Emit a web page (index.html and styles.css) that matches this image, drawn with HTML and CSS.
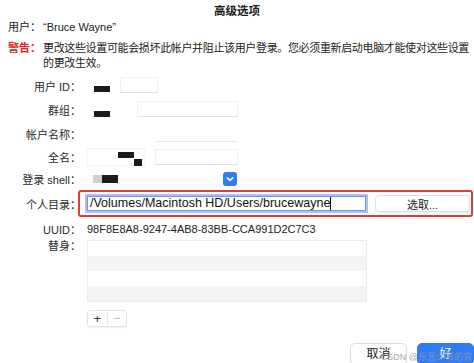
FILE: index.html
```html
<!DOCTYPE html>
<html lang="zh-CN">
<head>
<meta charset="utf-8">
<title>高级选项</title>
<link rel="stylesheet" href="styles.css">
</head>
<body>
<div class="dialog">
  <h1 class="title">高级选项</h1>
  <div class="info">
    <span class="info-label">用户：</span>
    <span class="info-text">“Bruce Wayne”</span>
  </div>
  <div class="info warn">
    <span class="info-label red">警告：</span>
    <span class="info-text tight">更改这些设置可能会损坏此帐户并阻止该用户登录。您必须重新启动电脑才能使对这些设置的更改生效。</span>
  </div>

  <div class="form">
    <div class="label">用户 ID：</div>
    <div class="content">
      <span class="redact rd-id"></span>
      <span class="field f-id"></span>
    </div>

    <div class="label">群组：</div>
    <div class="content">
      <span class="redact rd-grp"></span>
      <span class="field f-grp"></span>
    </div>

    <div class="label">帐户名称：</div>
    <div class="content">
      <span class="field f-acc"></span>
    </div>

    <div class="label">全名：</div>
    <div class="content">
      <span class="ghost">
        <span class="redact rd-n1"></span>
        <span class="redact rd-n2"></span>
      </span>
      <span class="field f-name"></span>
    </div>

    <div class="label">登录 shell：</div>
    <div class="content">
      <span class="select">
        <span class="redact rd-gray"></span>
        <span class="redact rd-sh"></span>
        <span class="chev">
          <svg width="14" height="14" viewBox="0 0 14 14"><path d="M4.3 5.8 L7 8.4 L9.7 5.8" fill="none" stroke="#fff" stroke-width="1.6" stroke-linecap="round" stroke-linejoin="round"/></svg>
        </span>
      </span>
    </div>

    <div class="label">个人目录：</div>
    <div class="content">
      <span class="input"><span class="caret">/Volumes/Macintosh HD/Users/brucewayne</span></span>
      <span class="btn choose">选取...</span>
    </div>

    <div class="label">UUID：</div>
    <div class="content uuid">98F8E8A8-9247-4AB8-83BB-CCA991D2C7C3</div>

    <div class="label top">替身：</div>
    <div class="content top">
      <div class="list">
        <div class="li"></div>
        <div class="li alt"></div>
        <div class="li"></div>
        <div class="li alt"></div>
      </div>
    </div>

    <div class="label"></div>
    <div class="content bottom">
      <span class="pm">
        <span class="pm-btn plus">+</span>
        <span class="pm-sep"></span>
        <span class="pm-btn minus">−</span>
      </span>
    </div>

    <div class="annot"></div>
  </div>

  <div class="footer">
    <span class="btn cancel">取消</span>
    <span class="btn ok">好</span>
  </div>
  <div class="watermark">CSDN @东恶少爷的背</div>
</div>
</body>
</html>
```

FILE: styles.css
```css
* { box-sizing: border-box; }
html, body { margin: 0; padding: 0; background: #fff; }
body {
  font-family: "Liberation Sans", "Noto Sans CJK SC", sans-serif;
  font-size: 11px;
  color: #222;
  width: 474px;
  height: 363px;
  overflow: hidden;
}
.dialog { position: relative; width: 474px; height: 363px; }

.title {
  margin: 0;
  padding-top: 3px;
  font-size: 11.5px;
  line-height: 16px;
  font-weight: bold;
  text-align: center;
  color: #1a1a1a;
}
.info {
  display: flex;
  padding-left: 8px;
  line-height: 15px;
  margin-top: 1px;
}
.info.warn { margin-top: 6px; }
.info-label { flex: 0 0 35px; white-space: nowrap; }
.info-label.red { color: #e5252a; font-weight: bold; }
.info-text { flex: 1; }
.info-text.tight { letter-spacing: -0.35px; }

.form {
  position: relative;
  margin-top: 3px;
  display: grid;
  grid-template-columns: 81px 387px;
  grid-template-rows: 24px 24px 23px 23px 22px 27px 23px 62px 25px;
  column-gap: 6px;
  align-items: center;
}
.label {
  text-align: right;
  white-space: nowrap;
  color: #2a2a2a;
}
.label.top { align-self: start; line-height: 13px; }
.content { display: flex; align-items: center; }
.content.top { align-self: start; }
.content.bottom { align-self: end; }

.redact { display: inline-block; background: #1b1b1b; flex: none; }
.rd-id { width: 16px; height: 6px; margin-left: 7px; margin-top: 6px; }
.rd-grp { width: 16px; height: 6px; margin-left: 7px; margin-top: 8px; }

.field {
  display: inline-block;
  flex: none;
  background: #fff;
  border: 1px solid #f0f0f0;
  border-bottom-color: #e2e2e2;
}
.f-id { width: 38px; height: 16px; margin-left: 10px; margin-top: -2px; }
.f-grp { width: 101px; height: 16px; margin-left: 27px; margin-top: -3px; }
.f-acc { width: 83px; height: 16px; margin-left: 68px; border-color: #fff; border-bottom-color: #e6e6e6; }
.f-name { width: 83px; height: 16px; margin-left: 10px; }

.ghost {
  display: flex;
  flex: none;
  align-items: flex-start;
  width: 58px;
  height: 18px;
  border: 1px solid #f4f4f4;
}
.rd-n1 { width: 16px; height: 6px; margin-left: 30px; margin-top: 3px; }
.rd-n2 { width: 8px; height: 7px; margin-top: 10px; }

.select { display: flex; align-items: center; width: 151px; height: 14px; flex: none; }
.rd-gray { width: 9px; height: 8px; margin-left: 6px; background: #cfcfcf; }
.rd-sh { width: 16px; height: 8px; }
.chev {
  margin-left: auto;
  margin-right: 1px;
  width: 14px;
  height: 14px;
  border-radius: 3px;
  background: #2f7cf6;
  display: flex;
}

.input {
  display: flex;
  flex: none;
  align-items: center;
  width: 279px;
  height: 15px;
  border: 1px solid #6f97e6;
  box-shadow: 0 0 0 2px #a8c2f4;
  background: #fff;
  padding-left: 2px;
  font-size: 12.5px;
  color: #111;
  white-space: nowrap;
  overflow: hidden;
}
.caret { border-right: 1px solid #000; line-height: 13px; }
.btn {
  display: inline-flex;
  flex: none;
  align-items: center;
  justify-content: center;
  background: #fff;
  border: 1px solid #dedede;
  border-radius: 4px;
  box-shadow: 0 1px 1px rgba(0,0,0,0.06);
  color: #222;
}
.choose { width: 95px; height: 17px; margin-left: 9px; }
.annot {
  position: absolute;
  left: 78px;
  top: 116px;
  width: 395px;
  height: 27px;
  border: 2px solid #e23b3b;
  border-radius: 3px;
  pointer-events: none;
}

.uuid { color: #222; white-space: nowrap; }

.list {
  width: 280px;
  height: 62px;
  border: 1px solid #ececec;
  display: flex;
  flex-direction: column;
}
.li { flex: 1; background: #fff; }
.li.alt { background: #f4f4f4; }

.pm {
  display: flex;
  align-items: center;
  width: 40px;
  height: 17px;
  border: 1px solid #e4e4e4;
  border-radius: 3px;
  box-shadow: 0 1px 1px rgba(0,0,0,0.05);
  background: #fff;
}
.pm-btn { flex: 1; text-align: center; font-size: 13px; line-height: 15px; }
.plus { color: #333; }
.minus { color: #c4c4c4; }
.pm-sep { width: 1px; height: 11px; background: #e6e6e6; }

.footer {
  display: flex;
  justify-content: flex-end;
  gap: 10px;
  margin-top: 16px;
}
.cancel { width: 57px; height: 22px; border-radius: 5px; font-size: 12px; padding-bottom: 4px; }
.ok {
  width: 57px;
  height: 22px;
  border-radius: 5px;
  border-color: #2f7cf6;
  background: #2f7cf6;
  color: #fff;
  font-size: 12px;
  padding-bottom: 4px;
}
.watermark {
  position: absolute;
  right: 2px;
  bottom: 0px;
  font-size: 9px;
  line-height: 11px;
  color: rgba(150,150,150,0.85);
  white-space: nowrap;
}
```
